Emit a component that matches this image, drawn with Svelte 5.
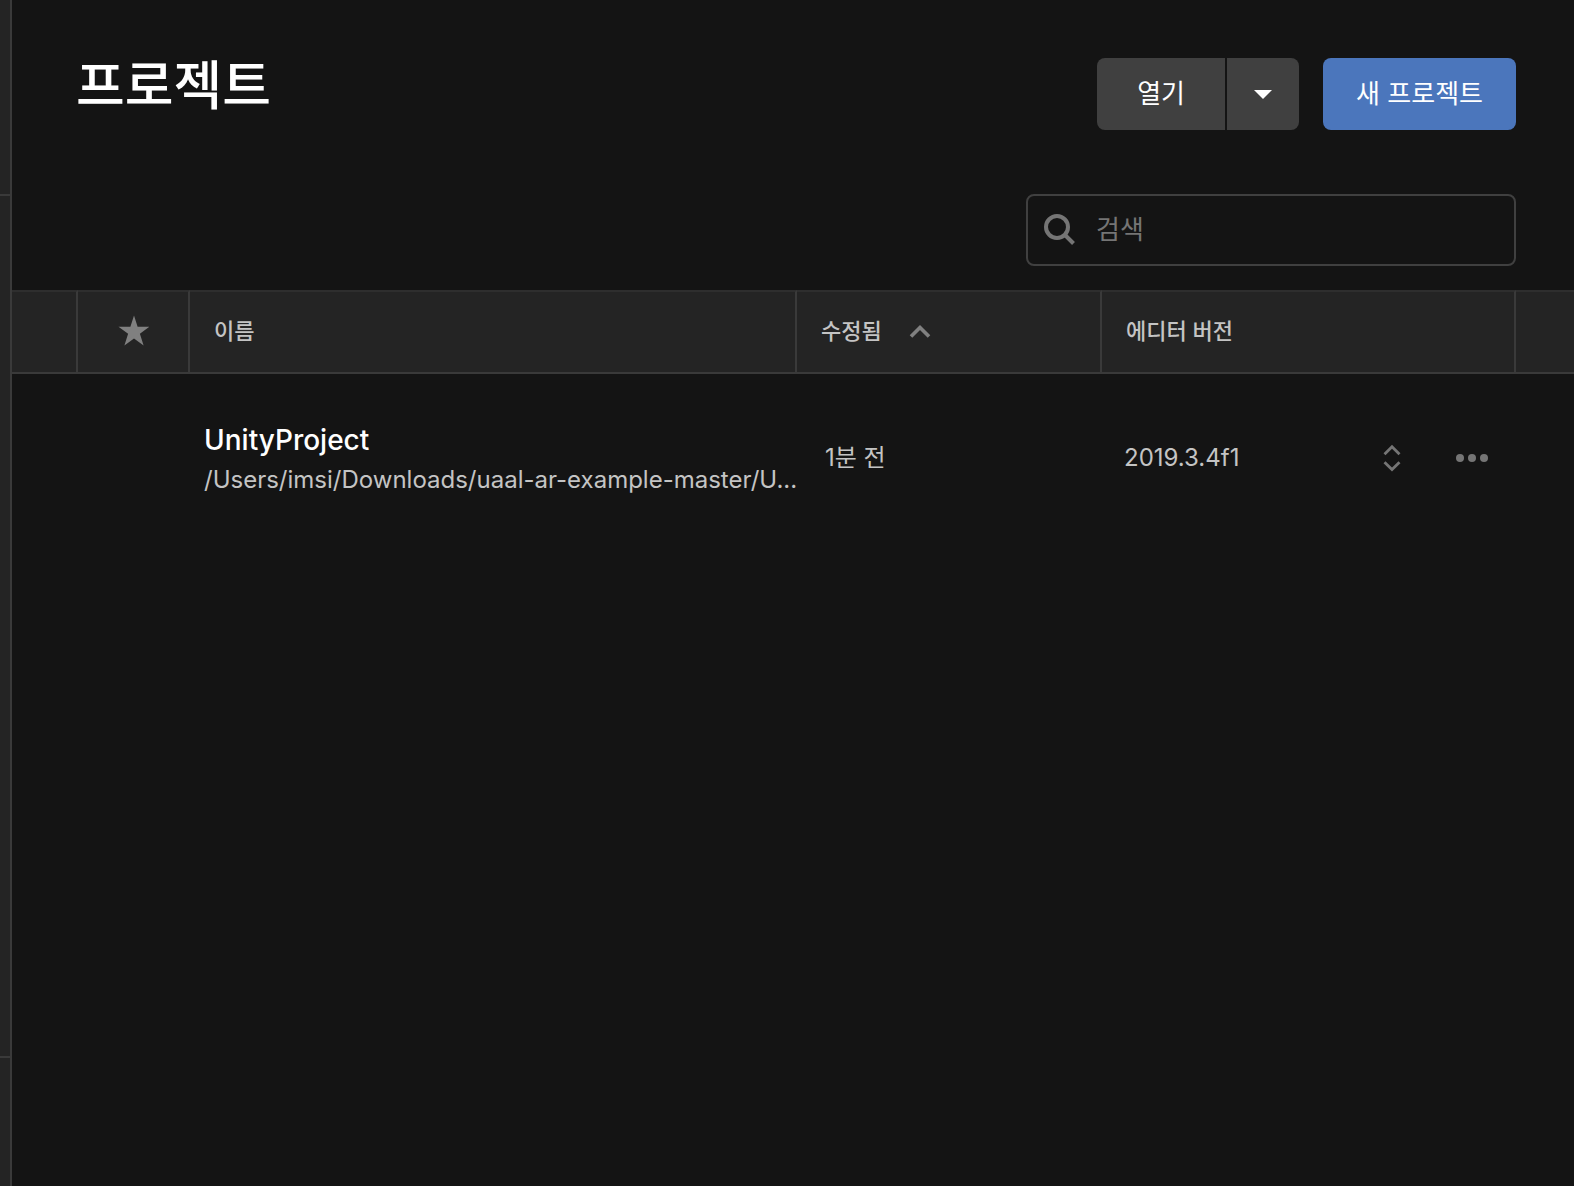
<script>
  let search = "";
  let ascending = true;

  let projects = [
    {
      id: 1,
      name: "UnityProject",
      path: "/Users/imsi/Downloads/uaal-ar-example-master/U...",
      modified: "1분 전",
      version: "2019.3.4f1"
    }
  ];

  $: visible = projects.filter(p =>
    p.name.toLowerCase().includes(search.toLowerCase())
  );

  function toggleSort() {
    ascending = !ascending;
    projects = [...projects].reverse();
  }
</script>

<style>
  :global(body) {
    background: #141414;
  }

  .app {
    display: flex;
    min-height: 100vh;
    color: #c4c4c4;
    font-family: Inter, "Noto Sans CJK KR", sans-serif;
    font-size: 24px;
    line-height: 32px;
  }

  aside {
    flex: none;
    display: flex;
    flex-direction: column;
    width: 10px;
    background: #242424;
    border-right: 2px solid #3a3a3a;
  }

  .account {
    height: 194px;
    border-bottom: 2px solid #3a3a3a;
  }

  .nav {
    flex: 1;
  }

  .downloads {
    height: 128px;
    border-top: 2px solid #3a3a3a;
  }

  main {
    flex: 1;
    min-width: 0;
  }

  button,
  input {
    font: inherit;
    color: inherit;
    background: none;
    border: none;
    margin: 0;
    padding: 0;
  }

  button {
    cursor: pointer;
  }

  svg {
    display: block;
  }

  header {
    display: flex;
    justify-content: space-between;
    align-items: flex-start;
    padding: 50px 58px 0 64px;
  }

  h1 {
    margin: 0;
    color: #fff;
    font-size: 53px;
    font-weight: 500;
    line-height: 72px;
  }

  .actions {
    display: flex;
    gap: 24px;
    padding-top: 8px;
  }

  .split {
    display: flex;
    gap: 2px;
  }

  .actions button {
    height: 72px;
    color: #fff;
    font-size: 26px;
    background: #404040;
  }

  .split .open {
    width: 128px;
    border-radius: 8px 0 0 8px;
  }

  .split .more {
    display: flex;
    align-items: center;
    justify-content: center;
    width: 72px;
    border-radius: 0 8px 8px 0;
  }

  .actions .create {
    padding: 0 33px;
    background: #4b76bc;
    border-radius: 8px;
  }

  .toolbar {
    display: flex;
    justify-content: flex-end;
    padding: 64px 58px 24px;
  }

  .search {
    display: flex;
    align-items: center;
    gap: 20px;
    box-sizing: border-box;
    width: 490px;
    height: 72px;
    padding: 0 16px;
    color: #757575;
    border: 2px solid #404040;
    border-radius: 8px;
  }

  .search input {
    flex: 1;
    min-width: 0;
    height: 40px;
    padding-bottom: 2px;
    color: #fff;
    font-size: 26px;
    outline: none;
  }

  .search input::placeholder {
    color: #757575;
    opacity: 1;
  }

  table {
    width: 100%;
    table-layout: fixed;
    border-collapse: separate;
    border-spacing: 0;
  }

  .col-edge {
    width: 66px;
  }

  .col-star {
    width: 112px;
  }

  .col-modified {
    width: 305px;
  }

  .col-version {
    width: 414px;
  }

  .col-end {
    width: 58px;
  }

  th {
    box-sizing: border-box;
    height: 84px;
    padding: 0 24px 2px;
    text-align: left;
    font-size: 22px;
    font-weight: 500;
    background: #242424;
    border-top: 2px solid #2e2e2e;
    border-right: 2px solid #3a3a3a;
    border-bottom: 2px solid #3a3a3a;
  }

  th:first-child,
  th:last-child {
    padding: 0;
  }

  th:last-child {
    border-right: none;
  }

  .star {
    color: #808080;
  }

  .star svg {
    margin: 0 auto;
  }

  .sort {
    display: flex;
    align-items: center;
    gap: 26px;
  }

  .sort svg {
    color: #808080;
  }

  .sort .down {
    transform: rotate(180deg);
  }

  td {
    height: 168px;
    padding: 0 28px;
  }

  .project {
    padding: 4px 0 0 14px;
    box-sizing: border-box;
    white-space: nowrap;
  }

  .project p {
    margin: 0;
    line-height: 39px;
  }

  .project .name {
    color: #fff;
    font-size: 28px;
    font-weight: 500;
  }

  .version {
    padding-left: 22px;
  }

  .version div {
    display: flex;
    align-items: center;
    gap: 55px;
  }

  .version span {
    flex: 1;
  }

  .version button {
    color: #757575;
  }
</style>

<div class="app">
  <aside>
    <div class="account"></div>
    <div class="nav"></div>
    <div class="downloads"></div>
  </aside>

  <main>
    <header>
      <h1>프로젝트</h1>
      <div class="actions">
        <div class="split">
          <button class="open">열기</button>
          <button class="more" aria-label="열기 옵션">
            <svg width="18" height="10" viewBox="0 0 18 10">
              <path d="M0 1h18L9 10z" fill="currentColor" />
            </svg>
          </button>
        </div>
        <button class="create">새 프로젝트</button>
      </div>
    </header>

    <div class="toolbar">
      <label class="search">
        <svg width="32" height="32" viewBox="0 0 32 32" fill="none" stroke="currentColor">
          <circle cx="13" cy="13" r="11" stroke-width="4" />
          <path d="M20.5 20.5l9 9" stroke-width="4" />
        </svg>
        <input type="text" placeholder="검색" aria-label="검색" bind:value={search} />
      </label>
    </div>

    <table>
      <colgroup>
        <col class="col-edge" />
        <col class="col-star" />
        <col />
        <col class="col-modified" />
        <col class="col-version" />
        <col class="col-end" />
      </colgroup>
      <thead>
        <tr>
          <th></th>
          <th class="star" aria-label="즐겨찾기">
            <svg width="32" height="32" viewBox="0 0 32 32">
              <path
                d="M17 0.5l3.6 11.2H32.5l-9.6 7L26.6 30.5l-9.6-7-9.6 7 3.7-11.8-9.6-7h11.9z"
                fill="currentColor" />
            </svg>
          </th>
          <th>이름</th>
          <th>
            <button class="sort" on:click={toggleSort}>
              수정됨
              <svg class:down={!ascending} width="24" height="16" viewBox="0 0 24 16">
                <path
                  d="M3 13.5l9-9 9 9"
                  fill="none"
                  stroke="currentColor"
                  stroke-width="3.6" />
              </svg>
            </button>
          </th>
          <th>에디터 버전</th>
          <th></th>
        </tr>
      </thead>
      <tbody>
        {#each visible as project (project.id)}
          <tr>
            <td></td>
            <td></td>
            <td class="project">
              <p class="name">{project.name}</p>
              <p>{project.path}</p>
            </td>
            <td>{project.modified}</td>
            <td class="version">
              <div>
                <span>{project.version}</span>
                <button aria-label="에디터 버전 선택">
                  <svg
                    width="18"
                    height="28"
                    viewBox="0 0 18 28"
                    fill="none"
                    stroke="currentColor"
                    stroke-width="2.8">
                    <path d="M1.5 10.2L9 2.8l7.5 7.4M1.5 18.2L9 25.6l7.5-7.4" />
                  </svg>
                </button>
                <button aria-label="메뉴">
                  <svg width="32" height="8" viewBox="0 0 32 8" fill="currentColor">
                    <circle cx="4" cy="4" r="4" />
                    <circle cx="16" cy="4" r="4" />
                    <circle cx="28" cy="4" r="4" />
                  </svg>
                </button>
              </div>
            </td>
            <td></td>
          </tr>
        {/each}
      </tbody>
    </table>
  </main>
</div>
